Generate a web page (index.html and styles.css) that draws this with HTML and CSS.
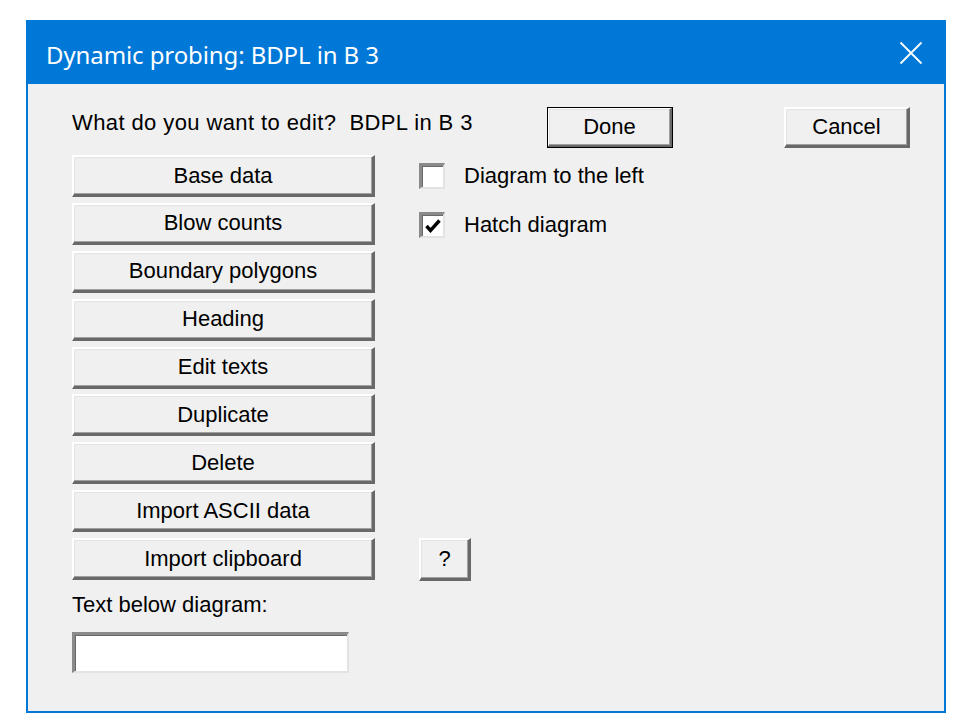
FILE: index.html
```html
<!DOCTYPE html>
<html>
<head>
<meta charset="utf-8">
<link rel="stylesheet" href="styles.css">
</head>
<body>
<div class="dialog">
  <div class="titlebar">
    <span class="title">Dynamic probing: BDPL in B 3</span>
    <svg class="close" width="24" height="24" viewBox="0 0 24 24"><path d="M1.5 1.5 L22.5 22.5 M22.5 1.5 L1.5 22.5" stroke="#fff" stroke-width="1.8" fill="none"/></svg>
  </div>
  <div class="client">
    <div class="toprow">
      <span class="prompt">What do you want to edit?&nbsp;&nbsp;BDPL in B 3</span>
      <button class="btn btn-default done">Done</button>
      <button class="btn cancel">Cancel</button>
    </div>
    <div class="main">
      <div class="leftcol">
        <button class="btn">Base data</button>
        <button class="btn">Blow counts</button>
        <button class="btn">Boundary polygons</button>
        <button class="btn">Heading</button>
        <button class="btn">Edit texts</button>
        <button class="btn">Duplicate</button>
        <button class="btn">Delete</button>
        <button class="btn">Import ASCII data</button>
        <button class="btn">Import clipboard</button>
      </div>
      <div class="rightcol">
        <div class="checks">
          <label class="check"><span class="box"></span><span>Diagram to the left</span></label>
          <label class="check"><span class="box"><svg width="16" height="14" viewBox="0 0 16 14"><path d="M1.5 7 L5.5 11.5 L14.5 1.5" stroke="#000" stroke-width="3.4" fill="none"/></svg></span><span>Hatch diagram</span></label>
        </div>
        <button class="btn help">?</button>
      </div>
    </div>
    <div class="below">Text below diagram:</div>
    <div class="input"></div>
  </div>
</div>
</body>
</html>
```
FILE: styles.css
```css
html, body {
  margin: 0;
  padding: 0;
  background: #ffffff;
}
body {
  font-family: "Liberation Sans", Arial, sans-serif;
  font-size: 22px;
  color: #000;
}
.dialog {
  margin: 20px 0 0 26px;
  width: 916px;
  border: 2px solid #0078d7;
  background: #f0f0f0;
}
.titlebar {
  height: 62px;
  background: #0078d7;
  display: flex;
  align-items: center;
  justify-content: space-between;
  padding: 0 20px 0 18px;
}
.title {
  font-family: "Noto Sans", "Open Sans", sans-serif;
  font-size: 24px;
  color: #fff;
  margin-top: 2px;
  letter-spacing: -0.1px;
}
.close {
  display: block;
  margin-right: 1px;
}
.client {
  height: 627px;
  box-sizing: border-box;
  padding: 23px 0 0 44px;
}
.toprow {
  display: flex;
  align-items: center;
  height: 41px;
}
.prompt {
  width: 475px;
  margin-top: -10px;
  letter-spacing: 0.4px;
}
.btn {
  font-family: "Liberation Sans", Arial, sans-serif;
  font-size: 22px;
  color: #000;
  background: #f0f0f0;
  border-style: solid;
  border-width: 2px 3px 3px 2px;
  border-color: #ffffff #696969 #696969 #ffffff;
  box-shadow: inset -1px -1px 0 #a0a0a0, inset 1px 1px 0 #e3e3e3;
  padding: 0;
  margin: 0;
  box-sizing: border-box;
  height: 42px;
  display: flex;
  align-items: center;
  justify-content: center;
}
.done, .cancel {
  width: 126px;
  height: 41px;
}
.btn-default {
  outline: 1.5px solid #000;
  outline-offset: -1.5px;
}
.cancel {
  margin-left: 111px;
}
.main {
  display: flex;
  margin-top: 7px;
}
.leftcol {
  width: 303px;
  display: flex;
  flex-direction: column;
  gap: 5.9px;
}
.rightcol {
  margin-left: 44px;
  display: flex;
  flex-direction: column;
  justify-content: space-between;
}
.checks {
  display: flex;
  flex-direction: column;
  gap: 7px;
}
.check {
  display: flex;
  align-items: center;
  height: 42px;
}
.box {
  width: 26px;
  height: 26px;
  box-sizing: border-box;
  background: #fff;
  border-style: solid;
  border-width: 3px 2px 2px 3px;
  border-color: #8a8a8a #e3e3e3 #e3e3e3 #8a8a8a;
  box-shadow: inset 1px 1px 0 #696969;
  margin-right: 19px;
  display: flex;
  align-items: center;
  justify-content: center;
}
.help {
  width: 52px;
  height: 43px;
  margin-bottom: -1px;
}
.below {
  margin-top: 12px;
  height: 26px;
  line-height: 26px;
}
.input {
  margin-top: 14px;
  width: 277px;
  height: 41px;
  box-sizing: border-box;
  background: #fff;
  border-style: solid;
  border-width: 3px 2px 2px 3px;
  border-color: #8a8a8a #e3e3e3 #e3e3e3 #8a8a8a;
  box-shadow: inset 1px 1px 0 #696969;
}
```
